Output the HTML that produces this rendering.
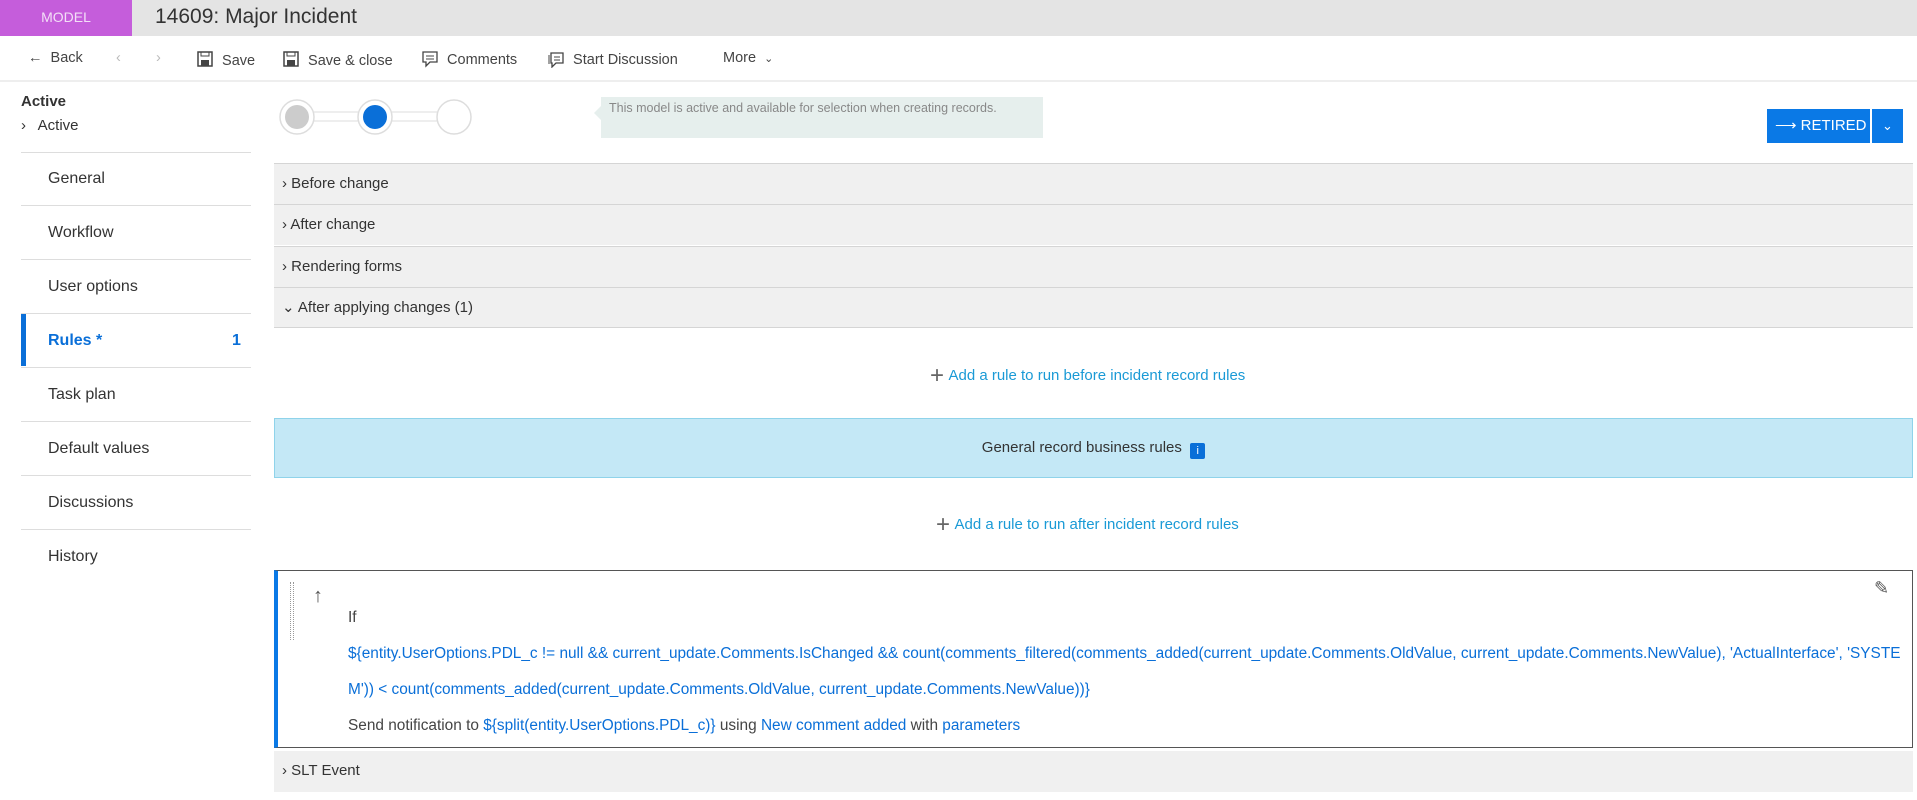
<!DOCTYPE html>
<html><head><meta charset="utf-8"><style>
*{box-sizing:border-box;margin:0;padding:0}
body{width:1917px;height:800px;overflow:hidden;background:#fff;font-family:"Liberation Sans",sans-serif;color:#333;position:relative}
.a{position:absolute}
.hdr{left:0;top:0;width:1917px;height:36px;background:#e4e4e4}
.tab{left:0;top:0;width:132px;height:36px;background:#c55ddb;color:#f3dff7;font-size:14px;text-align:center;line-height:34px}
.title{left:155px;top:0;line-height:34px;font-size:21px;color:#333}
.tb{top:36px;left:0;width:1917px;height:46px;border-bottom:2px solid #eee;font-size:14.5px;color:#444}
.tb span{position:absolute;top:14px}
.side{font-size:16px;color:#333}
.sep{left:21px;width:230px;height:1px;background:#ddd}
.row{left:274px;width:1639px;height:41px;background:#f0f0f0;border-top:1px solid #d5d5d5;font-size:15px;line-height:40px;padding-left:8px;color:#333}
.link{color:#1a9ad6;font-size:15px}
.blue{color:#0a6fd8}
.rl{left:348px;font-size:15.4px}
</style></head><body>
<div class="a hdr"></div>
<div class="a tab">MODEL</div>
<div class="a title">14609: Major Incident</div>
<div class="a tb">
<span style="left:28px">&#8592;&nbsp; Back</span>
<span style="left:116px;color:#bbb">&#8249;</span><span style="left:156px;color:#bbb">&#8250;</span>
<span style="left:196px"><svg width="18" height="18" style="vertical-align:-3px" viewBox="0 0 18 18"><rect x="2" y="2" width="14" height="14" fill="none" stroke="#444" stroke-width="1.5"/><rect x="5" y="10" width="8" height="6" fill="#444"/><rect x="5" y="2" width="8" height="4" fill="none" stroke="#444"/></svg>&nbsp; Save</span>
<span style="left:282px"><svg width="18" height="18" style="vertical-align:-3px" viewBox="0 0 18 18"><rect x="2" y="2" width="14" height="14" fill="none" stroke="#444" stroke-width="1.5"/><rect x="5" y="10" width="8" height="6" fill="#444"/><rect x="5" y="2" width="8" height="4" fill="none" stroke="#444"/></svg>&nbsp; Save &amp; close</span>
<span style="left:421px"><svg width="18" height="18" style="vertical-align:-4px" viewBox="0 0 18 18"><path d="M2 2h14v10H9l-4 4v-4H2z" fill="none" stroke="#444" stroke-width="1.3"/><path d="M5 6h8M5 9h8" stroke="#444"/></svg>&nbsp; Comments</span>
<span style="left:547px"><svg width="18" height="18" style="vertical-align:-4px" viewBox="0 0 18 18"><path d="M4 3h12v10H9l-4 4v-4H4z" fill="none" stroke="#444" stroke-width="1.3"/><path d="M2 5v9" stroke="#444"/><path d="M7 7h6M7 10h6" stroke="#444"/></svg>&nbsp; Start Discussion</span>
<span style="left:723px">More &nbsp;<span style="position:static;font-size:11px">&#8964;</span></span>
</div>
<div class="a side" style="left:21px;top:93px;font-weight:bold;font-size:15px">Active</div>
<div class="a side" style="left:21px;top:117px;font-size:15px">&#8250;&nbsp;&nbsp; Active</div>
<div class="a sep" style="top:152px"></div>
<div class="a side" style="left:48px;top:170px">General</div>
<div class="a sep" style="top:205px"></div>
<div class="a side" style="left:48px;top:224px">Workflow</div>
<div class="a sep" style="top:259px"></div>
<div class="a side" style="left:48px;top:278px">User options</div>
<div class="a sep" style="top:313px"></div>
<div class="a" style="left:21px;top:314px;width:5px;height:52px;background:#0a6fd8"></div>
<div class="a side" style="left:48px;top:332px;color:#0a6fd8;font-weight:bold">Rules *</div>
<div class="a side" style="left:232px;top:332px;color:#0a6fd8;font-weight:bold">1</div>
<div class="a sep" style="top:367px"></div>
<div class="a side" style="left:48px;top:386px">Task plan</div>
<div class="a sep" style="top:421px"></div>
<div class="a side" style="left:48px;top:440px">Default values</div>
<div class="a sep" style="top:475px"></div>
<div class="a side" style="left:48px;top:494px">Discussions</div>
<div class="a sep" style="top:529px"></div>
<div class="a side" style="left:48px;top:548px">History</div>

<svg class="a" style="left:278px;top:96px" width="196" height="42" viewBox="0 0 196 42">
<rect x="30" y="16" width="140" height="9" fill="#fff" stroke="#ddd"/>
<circle cx="19" cy="21" r="17" fill="#fff" stroke="#ddd" stroke-width="1.5"/><circle cx="19" cy="21" r="12" fill="#ccc"/>
<circle cx="97" cy="21" r="17" fill="#fff" stroke="#ddd" stroke-width="1.5"/><circle cx="97" cy="21" r="12" fill="#0a6fd8"/>
<circle cx="176" cy="21" r="17" fill="#fff" stroke="#ddd" stroke-width="1.5"/>
</svg>
<div class="a" style="left:601px;top:97px;width:442px;height:41px;background:#e6efed;font-size:12.5px;color:#888;padding:4px 8px">This model is active and available for selection when creating records.</div>
<div class="a" style="left:594px;top:106px;width:0;height:0;border:7px solid transparent;border-right-color:#e6efed;border-left:0"></div>
<div class="a" style="left:1767px;top:109px;width:103px;height:34px;background:#0a79e6;color:#fff;font-size:15px;line-height:34px;padding-left:8px">&#10230; RETIRED</div>
<div class="a" style="left:1872px;top:109px;width:31px;height:34px;background:#0a79e6;color:#fff;font-size:13px;line-height:34px;text-align:center">&#8964;</div>

<div class="a row" style="top:163px">&#8250; Before change</div>
<div class="a row" style="top:204px">&#8250; After change</div>
<div class="a row" style="top:246px">&#8250; Rendering forms</div>
<div class="a row" style="top:287px;border-bottom:1px solid #d5d5d5">&#8964; After applying changes (1)</div>
<div class="a" style="left:930px;top:362px"><span style="font-size:24px;color:#666;font-weight:200">+</span> <span class="link" style="vertical-align:3px">Add a rule to run before incident record rules</span></div>
<div class="a" style="left:274px;top:418px;width:1639px;height:60px;background:#c4e8f6;border:1px solid #8fd3ea;text-align:center;line-height:58px;font-size:15px;color:#333">General record business rules &nbsp;<span style="display:inline-block;width:15px;height:16px;background:#0a6fd8;color:#fff;font-size:11px;line-height:16px;vertical-align:-2px;border-radius:2px">i</span></div>
<div class="a" style="left:936px;top:511px"><span style="font-size:24px;color:#666;font-weight:200">+</span> <span class="link" style="vertical-align:3px">Add a rule to run after incident record rules</span></div>
<div class="a" style="left:274px;top:570px;width:1639px;height:178px;border:1px solid #555;border-left:4px solid #0a79e6"></div>
<div class="a" style="left:290px;top:582px;width:4px;height:58px;border-left:1px dotted #999;border-right:1px dotted #999"></div>
<div class="a" style="left:313px;top:585px;font-size:20px;color:#555">&#8593;</div>
<div class="a" style="left:1874px;top:578px;font-size:18px;color:#555">&#9998;</div>
<div class="a rl" style="top:609px;color:#444">If</div>
<div class="a rl blue" style="top:645px;width:1560px;white-space:nowrap">${entity.UserOptions.PDL_c != null &amp;&amp; current_update.Comments.IsChanged &amp;&amp; count(comments_filtered(comments_added(current_update.Comments.OldValue, current_update.Comments.NewValue), 'ActualInterface', 'SYSTE</div>
<div class="a rl blue" style="top:681px">M')) &lt; count(comments_added(current_update.Comments.OldValue, current_update.Comments.NewValue))}</div>
<div class="a rl" style="top:717px;color:#444">Send notification to <span class="blue">${split(entity.UserOptions.PDL_c)}</span> using <span class="blue">New comment added</span> with <span class="blue">parameters</span></div>
<div class="a row" style="top:751px;border-top:none">&#8250; SLT Event</div>
</body></html>
